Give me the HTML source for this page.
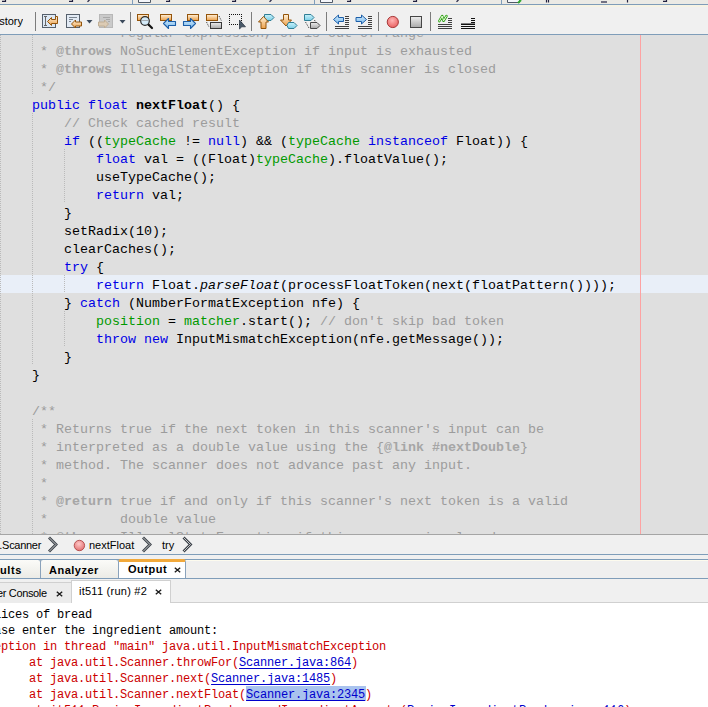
<!DOCTYPE html>
<html><head><meta charset="utf-8">
<style>
*{margin:0;padding:0;box-sizing:border-box}
html,body{width:708px;height:707px;overflow:hidden;background:#f0f0f0;position:relative;font-family:"Liberation Sans",sans-serif}
.abs{position:absolute}
#topstrip{left:0;top:0;width:708px;height:4px;background:#ebeae5}
#topline{left:0;top:4px;width:708px;height:1px;background:#7f9db9}
#toolbar{left:0;top:5px;width:708px;height:29px;background:#f0f0f0}
#tbline{left:0;top:34px;width:708px;height:1px;background:#7f9db9}
.sep{position:absolute;top:12px;width:1px;height:19px;background:#8a8a8a}
#editor{left:0;top:35px;width:708px;height:499px;background:#dfdfdf;overflow:hidden}
.code{position:absolute;left:0;font-family:"Liberation Mono",monospace;font-size:13.333px;line-height:18px;white-space:pre;color:#000}
.row{height:18px;position:absolute;left:0;width:708px;padding-top:2px}
.kw{color:#0000e6}
.cm{color:#9c9c9c}
.cb{color:#a6a6a6;font-weight:bold}
.fd{color:#009900}
.b{font-weight:bold}
.it{font-style:italic}
#hl{left:0;top:240px;width:708px;height:18px;background:#e9eff8}
#margin{left:640px;top:0;width:1px;height:499px;background:#fda2a2}
.guide{position:absolute;width:1px;border-left:1px dotted #c4c4c4}
#edline{left:0;top:534px;width:708px;height:1px;background:#a5a5a5}
#crumb{left:0;top:535px;width:708px;height:19px;background:#f0f0f0;font-size:11px;color:#000}
#crline{left:0;top:554px;width:708px;height:1px;background:#7f9db9}
#output{left:0;top:603px;width:708px;height:104px;background:#fff;overflow:hidden}
.out{position:absolute;left:-27px;font-family:"Liberation Mono",monospace;font-size:12px;letter-spacing:-0.2px;line-height:16px;white-space:pre;color:#000}
.err{color:#cc0000}
.lnk{color:#0000cc;text-decoration:underline;text-underline-offset:2px}
.tab{font-size:11px;font-weight:bold;letter-spacing:0.5px;line-height:13px;padding-top:5px;white-space:nowrap;background:linear-gradient(#fbfbf8,#ebebe6);border-top:1px solid #7f9db9;border-left:1px solid #8aa2bb;border-right:1px solid #8aa2bb;overflow:hidden;color:#000;border-radius:3px 3px 0 0}
.tab.sel{background:#fff;border-top:3px solid #f2a93b}
.xs{position:absolute}
.x{position:absolute;left:55px;top:2px;font-size:13px;font-weight:bold}
.stab{font-size:11px;line-height:13px;white-space:nowrap;background:#ececec;border:1px solid #d0d0d0;border-bottom:none;color:#000}
.stab.sel2{background:#fff}
.x2{position:absolute;top:3px;font-size:13px;font-weight:bold}
</style></head><body>
<div id="topstrip" class="abs"></div>
<div id="topline" class="abs"></div>
<div id="toolbar" class="abs"></div>
<div class="abs" style="left:0;top:15px;width:23px;height:14px;overflow:hidden"><div style="position:absolute;right:0;top:0;font-size:11px;line-height:13px;color:#000;white-space:nowrap">History</div></div>
<svg class="abs" style="left:0;top:0" width="708" height="35" viewBox="0 0 708 35">
<defs>
<linearGradient id="gOr" x1="0" y1="0" x2="0" y2="1"><stop offset="0" stop-color="#fff2dc"/><stop offset="1" stop-color="#eca04a"/></linearGradient>
<linearGradient id="gBl" x1="0" y1="0" x2="0" y2="1"><stop offset="0" stop-color="#d4ecfc"/><stop offset="1" stop-color="#78b8ec"/></linearGradient>
<linearGradient id="gCy" x1="0" y1="0" x2="0" y2="1"><stop offset="0" stop-color="#c8f0fa"/><stop offset="1" stop-color="#7cd0e8"/></linearGradient>
<linearGradient id="gGr" x1="0" y1="0" x2="0" y2="1"><stop offset="0" stop-color="#eeeeee"/><stop offset="1" stop-color="#a8a8a8"/></linearGradient>
<radialGradient id="gRd" cx="0.45" cy="0.35" r="0.7"><stop offset="0" stop-color="#ffb4b4"/><stop offset="1" stop-color="#e85c5c"/></radialGradient>
</defs>
<!-- top strip marks -->
<rect x="132" y="0" width="1" height="4" fill="#7f9db9"/>
<rect x="314" y="0" width="1" height="4" fill="#7f9db9"/>
<rect x="501" y="0" width="1" height="4" fill="#7f9db9"/>
<rect x="0" y="5" width="708" height="2" fill="#f6f3e4"/>
<path d="M138.5 0 V2.5 H150.5 V0" fill="#f4f6fa" stroke="#505a66" stroke-width="1"/>
<path d="M320.5 0 V2.5 H332.5 V0" fill="#f4f6fa" stroke="#505a66" stroke-width="1"/>
<path d="M507.5 0 V2.5 H519.5 V0" fill="#f4f6fa" stroke="#505a66" stroke-width="1"/>
<path d="M518 3 L521 0" stroke="#3a3" stroke-width="2"/>
<g fill="none" stroke="#202040" stroke-width="1.2">
<path d="M2 1.3 H5.5 V0"/><path d="M69 1.3 H72.5 V0"/><path d="M87.5 1.8 L89.5 0"/>
<path d="M166 1.3 H169.5 V0"/><path d="M232 1.3 H235.5 V0"/><path d="M269.5 1.8 L271.5 0"/>
<path d="M347 1.3 H350.5 V0"/><path d="M413 1.3 H416.5 V0"/><path d="M456.5 1.8 L458.5 0"/>
<path d="M546.5 0 V2.5"/><path d="M548.5 0 V2.5"/><path d="M601 2 H607"/><path d="M627.5 0 V2.5"/><path d="M663 1.3 H666.5 V0"/>
</g>
<!-- separators -->
<g fill="#7c7c7c"><rect x="35" y="12" width="1" height="19"/><rect x="130" y="12" width="1" height="19"/><rect x="251" y="12" width="1" height="19"/><rect x="326" y="12" width="1" height="19"/><rect x="378" y="12" width="1" height="19"/><rect x="430" y="12" width="1" height="19"/></g>
<!-- icon1 -->
<rect x="42.5" y="14.5" width="13" height="13" fill="#dde8f4" stroke="#56606c"/>
<path d="M44 16.5 H47 M45.5 16.5 V25.5 M44 25.5 H47" stroke="#666" stroke-width="1" fill="none"/>
<path d="M47.5 21.5 L51.5 17.5 V19.5 H55.5 V16.5 H57.5 V23.5 H51.5 V25.5 Z" fill="url(#gOr)" stroke="#94540a" stroke-width="1" stroke-linejoin="round"/>
<!-- icon2 -->
<rect x="66.5" y="14.5" width="13" height="13" fill="#e2eaf4" stroke="#56606c"/>
<path d="M69 17.5 H77 M69 19.5 H73 M69 21.5 H71" stroke="#7a8490" stroke-width="1"/>
<path d="M71.5 24 L75.5 20 V22 H81.5 V26 H75.5 V28 Z" fill="url(#gOr)" stroke="#94540a" stroke-width="1" stroke-linejoin="round"/>
<path d="M86.5 20 H92.5 L89.5 23.5 Z" fill="#3c4a5c"/>
<!-- icon3 disabled -->
<rect x="99.5" y="14.5" width="13" height="13" fill="#cacaca" stroke="#b8b8b8"/>
<path d="M103 17.5 H110 M106 19.5 H110 M108 21.5 H110" stroke="#a8a8a8" stroke-width="1"/>
<path d="M108.5 24 L104.5 20 V22 H98.5 V26 H104.5 V28 Z" fill="#dccbb4" stroke="#c0ae94" stroke-width="1" stroke-linejoin="round"/>
<path d="M119.5 20 H125.5 L122.5 23.5 Z" fill="#3c4a5c"/>
<!-- magnifier -->
<rect x="137.5" y="14.5" width="11" height="6" fill="url(#gOr)" stroke="#94540a"/>
<path d="M148.5 24.5 L152 28" stroke="#111" stroke-width="2.2" stroke-linecap="round"/>
<circle cx="145" cy="21" r="4.3" fill="#d4eaf8" stroke="#2a2a2a" stroke-width="1.2"/>
<path d="M141.8 20.5 H148.2" stroke="#a8aeb4" stroke-width="1"/>
<!-- find prev -->
<rect x="160.5" y="14.5" width="11" height="6" fill="url(#gOr)" stroke="#94540a"/>
<path d="M163.5 23.5 L168.5 18.5 V21.5 H175.5 V25.5 H168.5 V28.5 Z" fill="url(#gBl)" stroke="#1c5ea8" stroke-width="1.1" stroke-linejoin="round"/>
<!-- find next -->
<rect x="187.5" y="14.5" width="11" height="6" fill="url(#gOr)" stroke="#94540a"/>
<path d="M195.5 23.5 L190.5 18.5 V21.5 H183.5 V25.5 H190.5 V28.5 Z" fill="url(#gBl)" stroke="#1c5ea8" stroke-width="1.1" stroke-linejoin="round"/>
<!-- toggle highlight -->
<rect x="206.5" y="14.5" width="11" height="6" fill="url(#gOr)" stroke="#94540a"/>
<rect x="210.5" y="22.5" width="11" height="6" fill="url(#gGr)" stroke="#3a3a3a"/>
<path d="M219 16 L221.5 21 M206.5 22 L209 27" stroke="#333" stroke-width="1" stroke-dasharray="1 1"/>
<!-- dotted select -->
<g fill="#111"><rect x="229" y="14" width="1" height="1"/><rect x="229" y="24" width="1" height="1"/><rect x="231" y="14" width="1" height="1"/><rect x="231" y="24" width="1" height="1"/><rect x="233" y="14" width="1" height="1"/><rect x="233" y="24" width="1" height="1"/><rect x="235" y="14" width="1" height="1"/><rect x="235" y="24" width="1" height="1"/><rect x="237" y="14" width="1" height="1"/><rect x="237" y="24" width="1" height="1"/><rect x="239" y="14" width="1" height="1"/><rect x="239" y="24" width="1" height="1"/><rect x="241" y="14" width="1" height="1"/><rect x="241" y="24" width="1" height="1"/><rect x="229" y="16" width="1" height="1"/><rect x="241" y="16" width="1" height="1"/><rect x="229" y="18" width="1" height="1"/><rect x="241" y="18" width="1" height="1"/><rect x="229" y="20" width="1" height="1"/><rect x="241" y="20" width="1" height="1"/><rect x="229" y="22" width="1" height="1"/><rect x="241" y="22" width="1" height="1"/></g>
<path d="M239.5 20 L239.5 29 L241.8 26.8 L245.5 26.8 Z" fill="#4a5a6a" stroke="#2a3440" stroke-width="0.7" stroke-linejoin="round"/>
<!-- prev bookmark -->
<path d="M264.5 14.5 H271 L274 17.5 L271 20.5 H264.5 Z" fill="url(#gCy)" stroke="#2f7f96" stroke-linejoin="round"/>
<path d="M263.5 16.5 L268.5 22 H266 V28.5 H261 V22 H258.5 Z" fill="url(#gOr)" stroke="#94540a" stroke-linejoin="round"/>
<!-- next bookmark -->
<path d="M283.5 14.5 H288.5 V20 H291.5 L286 26 L280.5 20 H283.5 Z" fill="url(#gOr)" stroke="#94540a" stroke-linejoin="round"/>
<path d="M288.5 22.5 H294 L297 25.5 L294 28.5 H288.5 L287 25.5 Z" fill="url(#gCy)" stroke="#2f7f96" stroke-linejoin="round"/>
<!-- toggle bookmark -->
<path d="M304.5 14.5 H311 L314 17.5 L311 20.5 H304.5 Z" fill="url(#gCy)" stroke="#2f7f96" stroke-linejoin="round"/>
<path d="M310.5 22.5 H317 L320 25.5 L317 28.5 H310.5 Z" fill="url(#gGr)" stroke="#4a4a4a" stroke-linejoin="round"/>
<path d="M305.5 22 L309 28 M314.5 20 L315.5 22" stroke="#333" stroke-width="1" stroke-dasharray="1 1"/>
<!-- shift left -->
<path d="M333.5 19.5 L338.5 15 V17.5 H343.5 V21.5 H338.5 V24 Z" fill="url(#gBl)" stroke="#1c5ea8" stroke-linejoin="round"/>
<g fill="#404040"><rect x="345" y="16" width="4" height="1"/><rect x="345" y="18" width="4" height="1"/><rect x="345" y="20" width="4" height="1"/><rect x="345" y="22" width="4" height="1"/><rect x="345" y="24" width="4" height="1"/><rect x="335" y="26" width="14" height="1"/><rect x="335" y="28" width="14" height="1"/></g>
<!-- shift right -->
<path d="M366.5 19.5 L361.5 15 V17.5 H356 V21.5 H361.5 V24 Z" fill="url(#gBl)" stroke="#1c5ea8" stroke-linejoin="round"/>
<g fill="#404040"><rect x="368" y="16" width="4" height="1"/><rect x="368" y="18" width="4" height="1"/><rect x="368" y="20" width="4" height="1"/><rect x="368" y="22" width="4" height="1"/><rect x="368" y="24" width="4" height="1"/><rect x="358" y="26" width="14" height="1"/><rect x="358" y="28" width="14" height="1"/></g>
<!-- record -->
<circle cx="392.8" cy="22" r="5.6" fill="url(#gRd)" stroke="#a83a3a" stroke-width="1"/>
<!-- stop -->
<rect x="410.5" y="16.5" width="11" height="11" fill="url(#gGr)" stroke="#454545"/>
<!-- green N -->
<path d="M439.3 21.2 L442.2 16 L443.6 20.8 L446.5 16" fill="none" stroke="#30a018" stroke-width="2.5" stroke-linejoin="round" stroke-linecap="round"/>
<path d="M439.3 21.2 L442.2 16 L443.6 20.8 L446.5 16" fill="none" stroke="#eaffdc" stroke-width="1" stroke-linejoin="round" stroke-linecap="round"/>
<g fill="#404040"><rect x="448" y="18" width="4" height="1"/><rect x="448" y="20" width="4" height="1"/><rect x="448" y="22" width="4" height="1"/><rect x="438" y="24" width="14" height="1"/><rect x="438" y="26" width="14" height="1"/><rect x="438" y="28" width="14" height="1"/></g>
<!-- black bars -->
<g fill="#111"><rect x="471" y="18" width="4" height="1"/><rect x="471" y="20" width="4" height="1"/><rect x="471" y="22" width="4" height="1"/><rect x="461" y="23.5" width="14" height="1.5"/><rect x="461" y="26" width="14" height="1"/><rect x="461" y="28" width="14" height="1"/></g>
</svg>
<div id="tbline" class="abs"></div>

<div id="editor" class="abs">
  <div id="hl" class="abs"></div>
  <div id="margin" class="abs"></div>
<svg class="abs" style="left:0;top:0" width="708" height="499" viewBox="0 35 708 499">
<g stroke="#bababa" stroke-width="1" stroke-dasharray="1 1">
<path d="M0.5 35 V534"/>
<path d="M32.5 35 V95"/><path d="M32.5 113 V365"/><path d="M32.5 419 V534"/>
<path d="M64.5 149 V203"/><path d="M64.5 275 V293"/><path d="M64.5 311 V347"/>
</g></svg>
  <div class="code" style="top:-12px">
<div class="row" style="top:0"><span class="cm">     *         regular expression, or is out of range</span></div>
<div class="row" style="top:18px"><span class="cm">     * </span><span class="cb">@throws</span><span class="cm"> NoSuchElementException if input is exhausted</span></div>
<div class="row" style="top:36px"><span class="cm">     * </span><span class="cb">@throws</span><span class="cm"> IllegalStateException if this scanner is closed</span></div>
<div class="row" style="top:54px"><span class="cm">     */</span></div>
<div class="row" style="top:72px">    <span class="kw">public</span> <span class="kw">float</span> <span class="b">nextFloat</span>() {</div>
<div class="row" style="top:90px">        <span class="cm">// Check cached result</span></div>
<div class="row" style="top:108px">        <span class="kw">if</span> ((<span class="fd">typeCache</span> != <span class="kw">null</span>) &amp;&amp; (<span class="fd">typeCache</span> <span class="kw">instanceof</span> Float)) {</div>
<div class="row" style="top:126px">            <span class="kw">float</span> val = ((Float)<span class="fd">typeCache</span>).floatValue();</div>
<div class="row" style="top:144px">            useTypeCache();</div>
<div class="row" style="top:162px">            <span class="kw">return</span> val;</div>
<div class="row" style="top:180px">        }</div>
<div class="row" style="top:198px">        setRadix(10);</div>
<div class="row" style="top:216px">        clearCaches();</div>
<div class="row" style="top:234px">        <span class="kw">try</span> {</div>
<div class="row" style="top:252px">            <span class="kw">return</span> Float.<span class="it">parseFloat</span>(processFloatToken(next(floatPattern())));</div>
<div class="row" style="top:270px">        } <span class="kw">catch</span> (NumberFormatException nfe) {</div>
<div class="row" style="top:288px">            <span class="fd">position</span> = <span class="fd">matcher</span>.start(); <span class="cm">// don't skip bad token</span></div>
<div class="row" style="top:306px">            <span class="kw">throw</span> <span class="kw">new</span> InputMismatchException(nfe.getMessage());</div>
<div class="row" style="top:324px">        }</div>
<div class="row" style="top:342px">    }</div>
<div class="row" style="top:378px"><span class="cm">    /**</span></div>
<div class="row" style="top:396px"><span class="cm">     * Returns true if the next token in this scanner's input can be</span></div>
<div class="row" style="top:414px"><span class="cm">     * interpreted as a double value using the {</span><span class="cb">@link #nextDouble</span><span class="cm">}</span></div>
<div class="row" style="top:432px"><span class="cm">     * method. The scanner does not advance past any input.</span></div>
<div class="row" style="top:450px"><span class="cm">     *</span></div>
<div class="row" style="top:468px"><span class="cm">     * </span><span class="cb">@return</span><span class="cm"> true if and only if this scanner's next token is a valid</span></div>
<div class="row" style="top:486px"><span class="cm">     *         double value</span></div>
<div class="row" style="top:504px"><span class="cm">     * </span><span class="cb">@throws</span><span class="cm"> IllegalStateException if this scanner is closed</span></div>
  </div>
</div>
<div id="edline" class="abs"></div>
<div id="crumb" class="abs">
<div style="position:absolute;right:667px;top:3px;line-height:14px;white-space:nowrap;font-size:11px;letter-spacing:-0.3px">java.util.Scanner</div>
<div style="position:absolute;left:89px;top:3px;line-height:14px;white-space:nowrap;font-size:11px">nextFloat</div>
<div style="position:absolute;left:162px;top:3px;line-height:14px;white-space:nowrap;font-size:11px">try</div>
<svg style="position:absolute;left:0;top:0" width="708" height="19" viewBox="0 535 708 19">
<defs><radialGradient id="gRd2" cx="0.45" cy="0.35" r="0.7"><stop offset="0" stop-color="#ffc8c8"/><stop offset="1" stop-color="#e06a6a"/></radialGradient></defs>
<g fill="none" stroke="#3a4048" stroke-width="2.8" stroke-linejoin="miter"><path d="M49 537.5 L56 544.5 L49 551.5"/><path d="M143 537.5 L150 544.5 L143 551.5"/><path d="M183.5 537.5 L190.5 544.5 L183.5 551.5"/></g>
<g fill="none" stroke="#d8d8d8" stroke-width="0.9" stroke-linejoin="miter"><path d="M49 537.5 L56 544.5 L49 551.5"/><path d="M143 537.5 L150 544.5 L143 551.5"/><path d="M183.5 537.5 L190.5 544.5 L183.5 551.5"/></g>
<circle cx="79.4" cy="545.5" r="5.2" fill="url(#gRd2)" stroke="#b04848" stroke-width="0.9"/>
</svg>
</div>
<div id="crline" class="abs"></div>
<div class="abs" style="left:0;top:555px;width:708px;height:4px;background:#f0f0f0"></div>
<div class="abs" style="left:0;top:559px;width:708px;height:20px;background:#efefef;border-top:1px solid #7f9db9;border-bottom:1px solid #7f9db9"></div>
<div class="abs" style="left:0;top:560px;width:708px;height:1px;background:#fdfbee"></div>
<div class="abs tab" style="left:-40px;top:559px;width:81px;height:19px"><span style="position:absolute;left:39px;top:4px;letter-spacing:0.6px">ults</span></div>
<div class="abs tab" style="left:40px;top:559px;width:79px;height:19px;padding-left:8px;padding-top:4px">Analyzer</div>
<div class="abs tab sel" style="left:118px;top:559px;width:68px;height:19px;padding-left:9px;padding-top:1px">Output<svg class="xs" style="left:55px;top:5px" width="7" height="6"><path d="M0.8 0.8 L6.2 5.2 M6.2 0.8 L0.8 5.2" stroke="#1a1a1a" stroke-width="1.35"/></svg></div>
<div class="abs" style="left:0;top:579px;width:708px;height:24px;background:#f0f0f0;border-bottom:1px solid #d0d0d0"></div>
<div class="abs stab" style="left:-40px;top:582px;width:112px;height:21px"><span style="position:absolute;left:36px;top:4px;letter-spacing:-0.35px">er Console</span><svg class="xs" style="left:95px;top:8px" width="7" height="6"><path d="M0.8 0.8 L6.2 5.2 M6.2 0.8 L0.8 5.2" stroke="#1a1a1a" stroke-width="1.35"/></svg></div>
<div class="abs stab sel2" style="left:71px;top:580px;width:100px;height:23px"><span style="position:absolute;left:7px;top:3.5px;letter-spacing:0.25px">it511 (run) #2</span><svg class="xs" style="left:83px;top:8px" width="7" height="6"><path d="M0.8 0.8 L6.2 5.2 M6.2 0.8 L0.8 5.2" stroke="#1a1a1a" stroke-width="1.35"/></svg></div>
<div id="output" class="abs">
  <div class="out" style="top:0">
<div style="position:absolute;top:4px">3 slices of bread</div>
<div style="position:absolute;top:20px">Please enter the ingredient amount:</div>
<div style="position:absolute;top:36px" class="err">Exception in thread "main" java.util.InputMismatchException</div>
<div style="position:absolute;top:52px" class="err">        at java.util.Scanner.throwFor(<span class="lnk">Scanner.java:864</span>)</div>
<div style="position:absolute;top:68px" class="err">        at java.util.Scanner.next(<span class="lnk">Scanner.java:1485</span>)</div>
<div style="position:absolute;left:273px;top:83px;width:120px;height:15px;background:#a9c3ee"></div>
<div style="position:absolute;top:84px" class="err">        at java.util.Scanner.nextFloat(<span class="lnk">Scanner.java:2345</span>)</div>
<div style="position:absolute;top:100px" class="err">        at it511.RecipeIngredientReader.readIngredientAmounts(<span class="lnk">RecipeIngredientReader.java:116</span>)</div>
  </div>
</div>
</body></html>
